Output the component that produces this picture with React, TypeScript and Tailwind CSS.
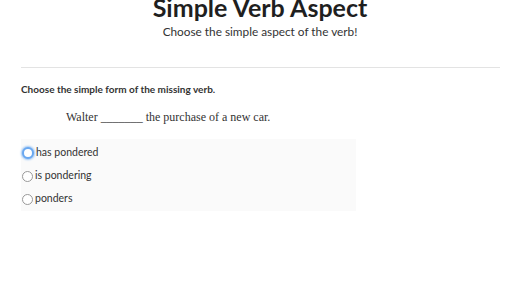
const options = ["has pondered", "is pondering", "ponders"];

export default function App() {
  return (
    <div className="w-[512px] h-[288px] bg-white overflow-hidden font-['Lato',sans-serif] text-[#222]">
      <div className="flex flex-col items-center mt-[-7px] pl-[8px]">
        <h1 className="text-[25px] leading-[29px] font-bold text-[#1f1f1f]">Simple Verb Aspect</h1>
        <p className="text-[11.8px] leading-[16px] mt-[2px] text-[#333]">Choose the simple aspect of the verb!</p>
      </div>
      <div className="ml-[21px] mr-[12px] mt-[27px] h-[1px] bg-[#e3e3e3]" />
      <div className="px-[21px] pt-[14px]">
        <p className="text-[10px] font-bold text-[#333]">Choose the simple form of the missing verb.</p>
        <p className="mt-[11px] ml-[45px] font-['Liberation_Serif',serif] text-[12px] text-[#333]">
          Walter _______ the purchase of a new car.
        </p>
        <div className="mt-[13px] w-[335px] bg-[#fafafa] pt-[6px] pb-[4px] flex flex-col gap-[7px]">
          {options.map((o, i) => (
            <label key={o} className="flex items-center gap-[2px] h-[16px] text-[10.5px] text-[#333]">
              <span
                className={
                  i === 0
                    ? "w-[12px] h-[12px] rounded-full border-[2px] border-[#6aa8f0] bg-white shadow-[0_0_2px_1px_#9cc6f5] ml-[1px]"
                    : "w-[11px] h-[11px] rounded-full border border-[#999] bg-white ml-[1px]"
                }
              />
              {o}
            </label>
          ))}
        </div>
      </div>
    </div>
  );
}
